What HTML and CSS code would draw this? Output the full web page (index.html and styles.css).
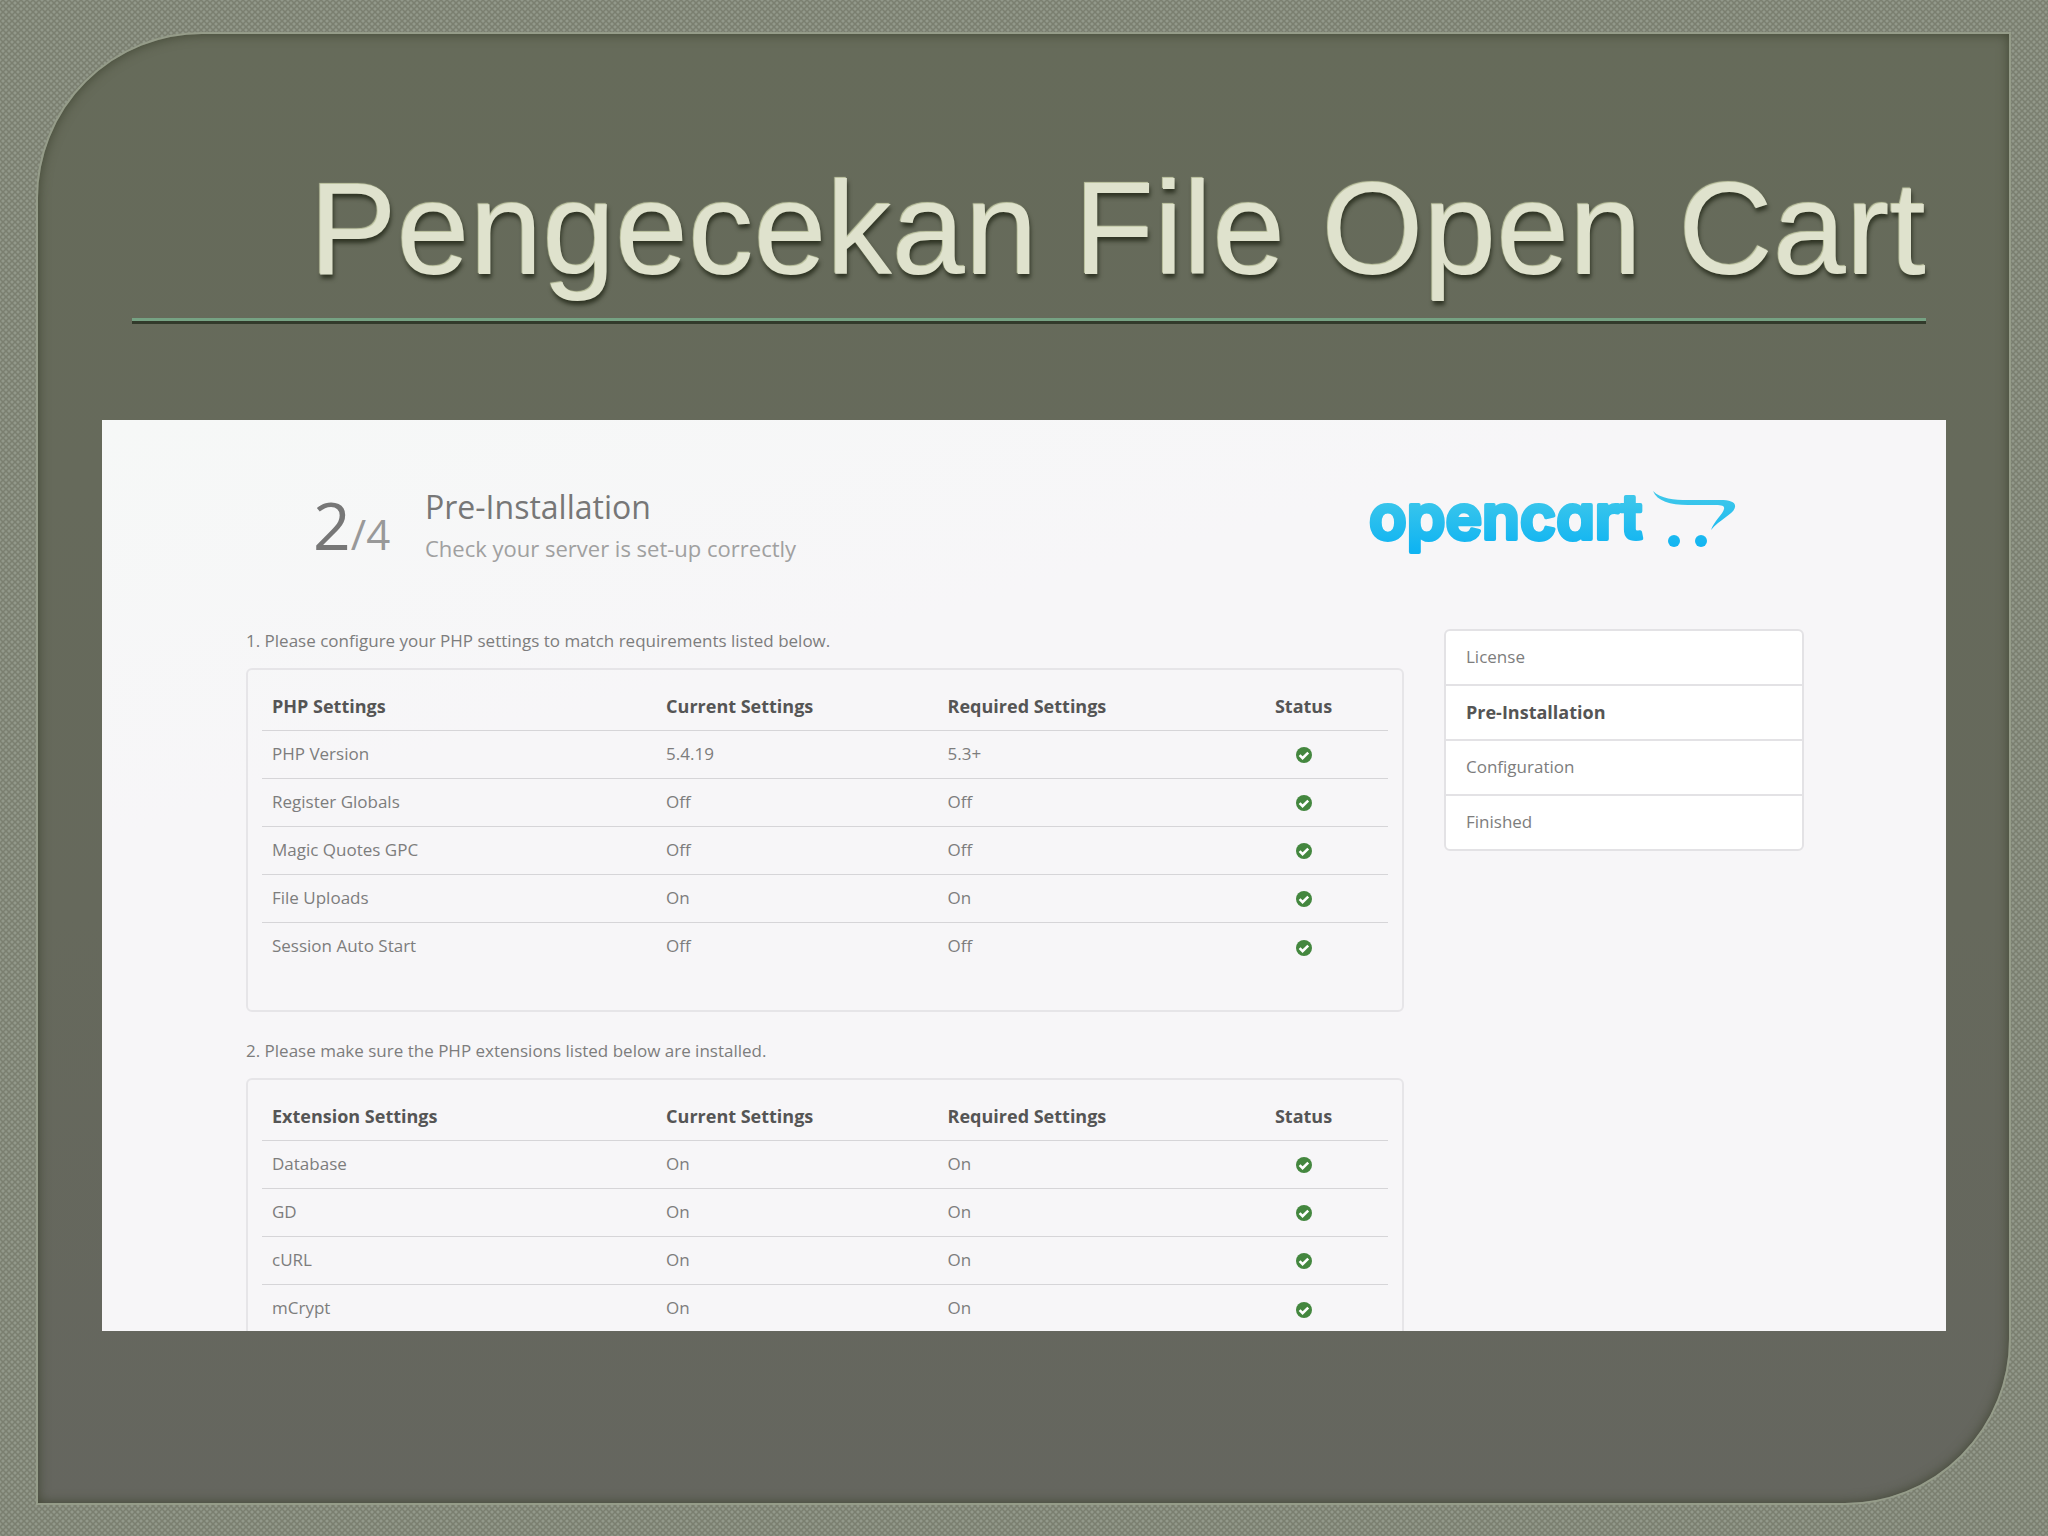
FILE: index.html
```html
<!DOCTYPE html>
<html lang="id">

<head>
    <meta charset="UTF-8">
    <meta name="viewport" content="width=device-width, initial-scale=1.0">
    <title>Pengecekan File Open Cart</title>
    <link rel="stylesheet" href="styles.css">
</head>

<body>
    <!-- check icon, reused in every status cell -->
    <svg class="sprite" aria-hidden="true">
        <symbol id="check" viewBox="0 0 16 16">
            <circle cx="8" cy="8" r="8" fill="#44873f" />
            <path d="M3.6 8.2l3 3 5.6-5.6" fill="none" stroke="#fff" stroke-width="2.6" />
        </symbol>
    </svg>

    <main class="slide">
        <h1 class="slide_title">Pengecekan File Open Cart</h1>

        <section class="screen">
            <header class="header">
                <div class="step">2<small>/4</small></div>
                <div class="heading">
                    <h2>Pre-Installation</h2>
                    <p>Check your server is set-up correctly</p>
                </div>
                <svg class="logo" viewBox="0 -16 374 104" role="img" aria-label="opencart">
                    <defs>
                        <linearGradient id="blue" gradientUnits="userSpaceOnUse" x1="0" y1="4" x2="0" y2="62">
                            <stop offset="0" stop-color="#42c9ea" />
                            <stop offset="1" stop-color="#10b4f2" />
                        </linearGradient>
                    </defs>
                    <text class="logo_text" x="1" y="52">opencart</text>
                    <path fill="url(#blue)" d="M285 4C293 12 306 13 320 13L352 13C362 13 368 15 367 20C366 27 352 32 343 43C346 34 355 27 356 22C357 18 352 18 346 18L320 18C302 18 289 14 285 4Z" />
                    <circle cx="306" cy="54" r="6" fill="url(#blue)" />
                    <circle cx="333" cy="54" r="6" fill="url(#blue)" />
                </svg>
            </header>

            <div class="row">
                <div class="content">
                    <p>1. Please configure your PHP settings to match requirements listed below.</p>
                    <fieldset>
                        <table>
                            <thead>
                                <tr>
                                    <th>PHP Settings</th>
                                    <th>Current Settings</th>
                                    <th>Required Settings</th>
                                    <th>Status</th>
                                </tr>
                            </thead>
                            <tbody>
                                <tr>
                                    <td>PHP Version</td>
                                    <td>5.4.19</td>
                                    <td>5.3+</td>
                                    <td><svg class="check"><use href="#check" /></svg></td>
                                </tr>
                                <tr>
                                    <td>Register Globals</td>
                                    <td>Off</td>
                                    <td>Off</td>
                                    <td><svg class="check"><use href="#check" /></svg></td>
                                </tr>
                                <tr>
                                    <td>Magic Quotes GPC</td>
                                    <td>Off</td>
                                    <td>Off</td>
                                    <td><svg class="check"><use href="#check" /></svg></td>
                                </tr>
                                <tr>
                                    <td>File Uploads</td>
                                    <td>On</td>
                                    <td>On</td>
                                    <td><svg class="check"><use href="#check" /></svg></td>
                                </tr>
                                <tr>
                                    <td>Session Auto Start</td>
                                    <td>Off</td>
                                    <td>Off</td>
                                    <td><svg class="check"><use href="#check" /></svg></td>
                                </tr>
                            </tbody>
                        </table>
                    </fieldset>

                    <p>2. Please make sure the PHP extensions listed below are installed.</p>
                    <fieldset>
                        <table>
                            <thead>
                                <tr>
                                    <th>Extension Settings</th>
                                    <th>Current Settings</th>
                                    <th>Required Settings</th>
                                    <th>Status</th>
                                </tr>
                            </thead>
                            <tbody>
                                <tr>
                                    <td>Database</td>
                                    <td>On</td>
                                    <td>On</td>
                                    <td><svg class="check"><use href="#check" /></svg></td>
                                </tr>
                                <tr>
                                    <td>GD</td>
                                    <td>On</td>
                                    <td>On</td>
                                    <td><svg class="check"><use href="#check" /></svg></td>
                                </tr>
                                <tr>
                                    <td>cURL</td>
                                    <td>On</td>
                                    <td>On</td>
                                    <td><svg class="check"><use href="#check" /></svg></td>
                                </tr>
                                <tr>
                                    <td>mCrypt</td>
                                    <td>On</td>
                                    <td>On</td>
                                    <td><svg class="check"><use href="#check" /></svg></td>
                                </tr>
                            </tbody>
                        </table>
                    </fieldset>
                </div>

                <ul class="steps">
                    <li>License</li>
                    <li class="active">Pre-Installation</li>
                    <li>Configuration</li>
                    <li>Finished</li>
                </ul>
            </div>
        </section>
    </main>
</body>

</html>
```

FILE: styles.css
```css
* {
    margin: 0;
    padding: 0;
    box-sizing: border-box;
    list-style: none;
}

/* woven backdrop */
body {
    display: flex;
    height: 100vh;
    padding: 32px 37px 31px 36px;
    background-color: #7b7f70;
    background-image:
        radial-gradient(circle, #92988a 1px, transparent 2px),
        radial-gradient(circle, #92988a 1px, transparent 2px);
    background-size: 6px 6px;
    background-position: 0 0, 3px 3px;
    font-family: "Open Sans", "Noto Sans", sans-serif;
    font-size: 17px;
    line-height: 24px;
    color: #7d7d7d;
}

.sprite {
    position: absolute;
    width: 0;
    height: 0;
}

/* slide panel */
.slide {
    flex: 1;
    display: flex;
    flex-direction: column;
    min-width: 0;
    padding: 106px 63px 172px 64px;
    border: 2px solid #959c89;
    border-radius: 166px 0;
    background: linear-gradient(#666b5a, #66695c 60%, #65665f);
    box-shadow: inset 0 0 12px #414633;
}

.slide_title {
    flex: none;
    margin: 0 20px 99px 30px;
    border-bottom: 3px solid #76a283;
    box-shadow: 0 3px 0 #323a2b;
    font-family: "Liberation Sans", Arial, sans-serif;
    font-size: 131px;
    font-weight: 400;
    line-height: 178px;
    text-align: right;
    color: #dfe2cd;
    text-shadow: -1px -1px 1px #c5cba8, 1px 4px 4px #2f3424;
}

/* installer page */
.screen {
    flex: 1;
    min-height: 0;
    padding: 64px 142px 0 144px;
    overflow: hidden;
    background: linear-gradient(165deg, #f6f8f7, #f7f6f8 30%);
}

.header {
    display: flex;
    align-items: flex-start;
    height: 145px;
    padding: 0 62px 0 67px;
}

.step {
    width: 112px;
    font-size: 66px;
    line-height: 80px;
    color: #777;
}

.step small {
    font-size: 42px;
    color: #999;
}

.heading h2 {
    font-size: 32px;
    font-weight: 400;
    line-height: 46px;
    color: #777;
}

.heading p {
    font-size: 22px;
    line-height: 36px;
    color: #a0a0a0;
}

.logo {
    width: 374px;
    height: 104px;
    margin: -13px 0 0 auto;
}

.logo_text {
    font-family: Inter, sans-serif;
    font-size: 62px;
    font-weight: 600;
    font-feature-settings: "cv11";
    fill: url(#blue);
    stroke: url(#blue);
    stroke-width: 4px;
    stroke-linejoin: round;
}

.row {
    display: flex;
    align-items: flex-start;
    gap: 40px;
}

.content {
    flex: 1;
}

.content p {
    margin-bottom: 15px;
}

fieldset {
    margin-bottom: 27px;
    padding: 12px 14px 40px;
    border: 2px solid #e6e5e8;
    border-radius: 6px;
}

table {
    width: 100%;
    border-collapse: collapse;
    table-layout: fixed;
}

th,
td {
    width: 25%;
    height: 48px;
    padding: 0 10px;
    text-align: left;
    border-top: 1px solid #d6d5d8;
}

th {
    border-top: 0;
    font-size: 18px;
    color: #555;
}

th:first-child {
    width: 35%;
}

th:last-child,
td:last-child {
    width: 15%;
    text-align: center;
}

.check {
    width: 16px;
    height: 16px;
    vertical-align: middle;
}

/* step list */
.steps {
    width: 360px;
    border: 2px solid #e3e2e5;
    border-radius: 6px;
    background: #fff;
}

.steps li {
    padding: 14px 20px 15px;
    border-top: 2px solid #e3e2e5;
}

.steps li:first-child {
    border-top: 0;
}

.steps .active {
    font-size: 18px;
    font-weight: 700;
    color: #555;
}
```
